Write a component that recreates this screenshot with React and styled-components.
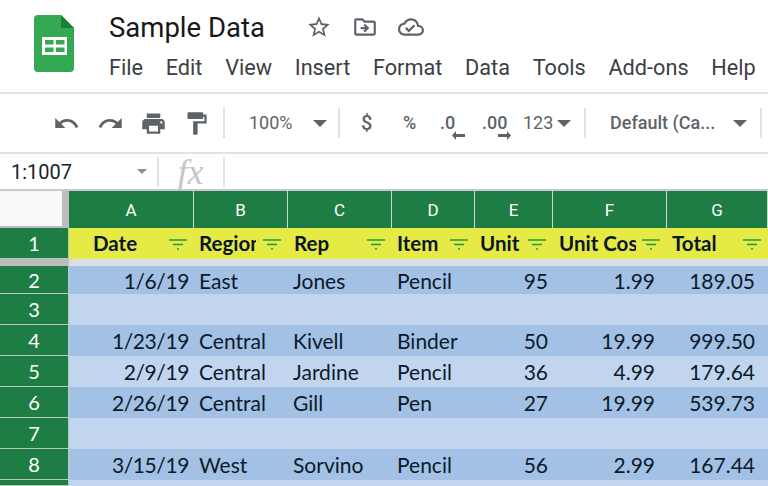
import React from 'react';
import styled, { createGlobalStyle } from 'styled-components';

const GlobalStyle = createGlobalStyle`
  html, body {
    margin: 0;
    padding: 0;
    background: #fff;
    overflow: hidden;
  }
`;

const Page = styled.div`
  width: 768px;
  height: 486px;
  overflow: hidden;
  font-family: Roboto, "Liberation Sans", sans-serif;
  color: #202124;
`;

const Header = styled.header`
  height: 94px;
  display: flex;
  padding-left: 34px;
  box-sizing: border-box;
  border-bottom: 2px solid #e2e3e5;
`;

const Logo = styled.svg`
  width: 40px;
  height: 57px;
  margin-top: 15px;
  flex: none;
`;

const TitleBlock = styled.div`
  margin-left: 35px;
  display: flex;
  flex-direction: column;
`;

const TitleRow = styled.div`
  display: flex;
  align-items: center;
  height: 36px;
  margin-top: 9px;
`;

const Title = styled.div`
  font-size: 27.5px;
  width: 197px;
  color: #17181a;
`;

const TitleIcon = styled.svg`
  width: ${p => p.$w || 26}px;
  height: 26px;
  margin-right: ${p => p.$gap || 0}px;
  fill: #5f6368;
`;

const Menu = styled.nav`
  display: flex;
  gap: 22.7px;
  margin-top: 10px;
  font-size: 21.7px;
  line-height: 26px;
  color: #3c4043;
`;

const Toolbar = styled.div`
  height: 60px;
  box-sizing: border-box;
  border-bottom: 2px solid #e2e3e5;
  display: flex;
  align-items: center;
  padding-left: 53px;
  color: #5f6368;
`;

const ToolIcon = styled.svg`
  width: 27px;
  height: 27px;
  fill: #5f6368;
  margin-right: ${p => p.$gap || 0}px;
  flex: none;
`;

const Sep = styled.div`
  width: 2px;
  height: 30px;
  background: #dfe3e8;
  margin: 0 ${p => p.$right || 0}px 0 ${p => p.$left || 0}px;
  flex: none;
`;

const ToolText = styled.div`
  font-size: ${p => p.$size || 18}px;
  font-weight: ${p => p.$bold ? 500 : 400};
  width: ${p => p.$w}px;
  flex: none;
  white-space: nowrap;
  line-height: 24px;
  position: relative;
`;

const Caret = styled.span`
  width: 0;
  height: 0;
  border-left: ${p => p.$size || 7}px solid transparent;
  border-right: ${p => p.$size || 7}px solid transparent;
  border-top: ${p => p.$size || 7}px solid ${p => p.$color || '#5f6368'};
  flex: none;
`;

const DecimalArrow = styled.svg`
  position: absolute;
  top: 20px;
  left: ${p => p.$left}px;
  width: 13px;
  height: 9px;
  fill: #5f6368;
`;

const FormulaBar = styled.div`
  height: 37px;
  box-sizing: border-box;
  border-bottom: 2px solid #c9cacc;
  display: flex;
  align-items: center;
  padding-left: 11px;
`;

const NameBox = styled.div`
  width: 126px;
  font-size: 20px;
  color: #202124;
  flex: none;
`;

const Fx = styled.div`
  font-family: "Liberation Serif", serif;
  font-style: italic;
  font-size: 36px;
  color: #c4c6c9;
  width: 27px;
  margin: 0 19px 0 18px;
  text-align: center;
  line-height: 30px;
  flex: none;
  white-space: nowrap;
`;

const Grid = styled.div`
  display: grid;
  grid-template-columns: 69px 125px 94px 104px 83px 78px 114px 101px;
  grid-auto-rows: min-content;
`;

const Corner = styled.div`
  height: 37px;
  box-sizing: border-box;
  background: #f8f9fa;
  border-right: 7px solid #bdbdbd;
  border-bottom: 2px solid #bdbdbd;
`;

const ColHead = styled.div`
  height: 37px;
  box-sizing: border-box;
  background: #1e7d43;
  border-right: 1px solid #c6d6cc;
  color: #fff;
  font-size: 17px;
  display: flex;
  align-items: center;
  justify-content: center;
`;

const RowHead = styled.div`
  height: ${p => p.$h}px;
  box-sizing: border-box;
  background: #1e7d43;
  border-bottom: 1px solid #b9c9bf;
  border-right: 1px solid #b9c9bf;
  color: #fff;
  font-family: Lato, sans-serif;
  font-size: 20px;
  display: flex;
  align-items: center;
  justify-content: center;
`;

const Cell = styled.div`
  height: ${p => p.$h}px;
  box-sizing: border-box;
  background: ${p => p.$bg};
  font-family: Lato, "Open Sans", sans-serif;
  font-size: 21px;
  letter-spacing: ${p => p.$tight ? '-0.4px' : '0'};
  color: #0c1a2b;
  padding: 0 ${p => p.$padRight}px 0 5px;
  display: flex;
  align-items: center;
  justify-content: ${p => p.$right ? 'flex-end' : 'flex-start'};
  white-space: nowrap;
  overflow: hidden;
`;

const HeadCell = styled.div`
  height: 31px;
  box-sizing: border-box;
  background: #e6ea44;
  font-family: Lato, "Open Sans", sans-serif;
  font-weight: 700;
  font-size: 20.5px;
  color: #0a1526;
  display: flex;
  align-items: center;
  padding: 0 0 2px ${p => p.$pad}px;
  position: relative;
  white-space: nowrap;
  overflow: hidden;
`;

const HeadLabel = styled.span`
  display: block;
  overflow: hidden;
  width: ${p => p.$w}px;
  flex: none;
`;

const FilterIcon = styled.svg`
  position: absolute;
  right: 6px;
  top: 10px;
  width: 20px;
  height: 13px;
  stroke: #1e9a4a;
  stroke-width: 1.5;
  fill: none;
`;

const FreezeHead = styled.div`
  height: 7px;
  background: #bdbdbd;
`;

const FreezeCell = styled.div`
  height: 7px;
  grid-column: span 7;
  background: #d8dde6;
`;

const icons = {
  undo: 'M12.5 8c-2.65 0-5.05.99-6.9 2.6L2 7v9h9l-3.62-3.62c1.39-1.16 3.16-1.88 5.12-1.88 3.54 0 6.55 2.31 7.6 5.5l2.37-.78C21.08 11.03 17.15 8 12.5 8z',
  redo: 'M18.4 10.6C16.55 8.99 14.15 8 11.5 8c-4.65 0-8.58 3.03-9.96 7.22L3.9 16c1.05-3.19 4.05-5.5 7.6-5.5 1.95 0 3.73.72 5.12 1.88L13 16h9V7l-3.6 3.6z',
  print: 'M19 8H5c-1.66 0-3 1.34-3 3v6h4v4h12v-4h4v-6c0-1.66-1.34-3-3-3zm-3 11H8v-5h8v5zm3-7c-.55 0-1-.45-1-1s.45-1 1-1 1 .45 1 1-.45 1-1 1zm-1-9H6v4h12V3z',
  paint: 'M18 4V3c0-.55-.45-1-1-1H5c-.55 0-1 .45-1 1v4c0 .55.45 1 1 1h12c.55 0 1-.45 1-1V6h1v4H9v11c0 .55.45 1 1 1h2c.55 0 1-.45 1-1v-9h8V4h-3z',
  star: 'M22 9.24l-7.19-.62L12 2 9.19 8.63 2 9.24l5.46 4.73L5.82 21 12 17.27 18.18 21l-1.63-7.03L22 9.24zM12 15.4l-3.76 2.27 1-4.28-3.32-2.88 4.38-.38L12 6.1l1.71 4.04 4.38.38-3.32 2.88 1 4.28L12 15.4z',
  move: 'M20 6h-8l-2-2H4c-1.1 0-1.99.9-1.99 2L2 18c0 1.1.9 2 2 2h16c1.1 0 2-.9 2-2V8c0-1.1-.9-2-2-2zm0 12H4V6h5.17l2 2H20v10zm-8.01-9l-1.41 1.41L12.16 12H8v2h4.16l-1.59 1.59L11.99 17 16 13.01 11.99 9z',
  cloud: 'M19.35 10.04C18.67 6.59 15.64 4 12 4 9.11 4 6.6 5.64 5.35 8.04 2.34 8.36 0 10.91 0 14c0 3.31 2.69 6 6 6h13c2.76 0 5-2.24 5-5 0-2.64-2.05-4.78-4.65-4.96zM19 18H6c-2.21 0-4-1.79-4-4 0-2.05 1.53-3.76 3.56-3.97l1.07-.11.5-.95C8.08 7.14 9.94 6 12 6c2.62 0 4.88 1.86 5.39 4.43l.3 1.5 1.53.11c1.56.1 2.78 1.41 2.78 2.96 0 1.65-1.35 3-3 3zm-9-3.82l-2.09-2.09L6.5 13.5 10 17l6.01-6.01-1.41-1.41z',
};

const menuItems = ['File', 'Edit', 'View', 'Insert', 'Format', 'Data', 'Tools', 'Add-ons', 'Help'];
const columns = ['A', 'B', 'C', 'D', 'E', 'F', 'G'];
const headers = [
  { label: 'Date', pad: 24 },
  { label: 'Region', pad: 5, clip: 57 },
  { label: 'Rep', pad: 6 },
  { label: 'Item', pad: 5 },
  { label: 'Unit', pad: 5 },
  { label: 'Unit Cost', pad: 6, clip: 77 },
  { label: 'Total', pad: 5 },
];

const DARK = '#a2c1e4';
const LIGHT = '#c1d6ee';

const rows = [
  { n: 2, h: 28, bg: DARK, cells: ['1/6/19', 'East', 'Jones', 'Pencil', '95', '1.99', '189.05'] },
  { n: 3, h: 31, bg: LIGHT, cells: [] },
  { n: 4, h: 31, bg: DARK, cells: ['1/23/19', 'Central', 'Kivell', 'Binder', '50', '19.99', '999.50'] },
  { n: 5, h: 31, bg: LIGHT, cells: ['2/9/19', 'Central', 'Jardine', 'Pencil', '36', '4.99', '179.64'] },
  { n: 6, h: 31, bg: DARK, cells: ['2/26/19', 'Central', 'Gill', 'Pen', '27', '19.99', '539.73'] },
  { n: 7, h: 31, bg: LIGHT, cells: [] },
  { n: 8, h: 31, bg: DARK, cells: ['3/15/19', 'West', 'Sorvino', 'Pencil', '56', '2.99', '167.44'] },
  { n: '', h: 6, bg: LIGHT, cells: [] },
];

const isRight = i => i === 0 || i >= 4;
const rightPad = [5, 5, 5, 5, 5, 12, 13];

const Icon = ({ name, gap }) => (
  <ToolIcon viewBox="0 0 24 24" $gap={gap}><path d={icons[name]} /></ToolIcon>
);

export default function App() {
  return (
    <Page>
      <GlobalStyle />
      <Header>
        <Logo viewBox="0 0 40 57">
          <path d="M4 0h23l13 13v40a4 4 0 0 1-4 4H4a4 4 0 0 1-4-4V4a4 4 0 0 1 4-4z" fill="#34a853" />
          <path d="M27 0l13 13H27z" fill="#188038" />
          <path d="M8 22h25v18H8z" fill="#fff" />
          <path d="M11 25h8.5v4.5H11zM22 25h8.5v4.5H22zM11 32.5h8.5V37H11zM22 32.5h8.5V37H22z" fill="#34a853" />
        </Logo>
        <TitleBlock>
          <TitleRow>
            <Title>Sample Data</Title>
            <TitleIcon viewBox="0 0 24 24" $gap={20}><path d={icons.star} /></TitleIcon>
            <TitleIcon viewBox="0 0 24 24" $gap={20}><path d={icons.move} /></TitleIcon>
            <TitleIcon viewBox="0 0 24 24" $w={26}><path d={icons.cloud} /></TitleIcon>
          </TitleRow>
          <Menu>
            {menuItems.map(item => <span key={item}>{item}</span>)}
          </Menu>
        </TitleBlock>
      </Header>

      <Toolbar>
        <Icon name="undo" gap={17} />
        <Icon name="redo" gap={16} />
        <Icon name="print" gap={16} />
        <Icon name="paint" />
        <Sep $left={13} $right={24} />
        <ToolText $w={64}>100%</ToolText>
        <Caret />
        <Sep $left={11} $right={21} />
        <ToolText $w={42} $size={20} $bold>$</ToolText>
        <ToolText $w={37} $bold>%</ToolText>
        <ToolText $w={42} $bold>
          .0
          <DecimalArrow viewBox="0 0 13 9" $left={12}><path d="M4 0v3h9v3H4v3L0 4.5z" /></DecimalArrow>
        </ToolText>
        <ToolText $w={41} $bold>
          .00
          <DecimalArrow viewBox="0 0 13 9" $left={16}><path d="M9 0v3H0v3h9v3l4-4.5z" /></DecimalArrow>
        </ToolText>
        <ToolText $w={34}>123</ToolText>
        <Caret />
        <Sep $left={13} $right={24} />
        <ToolText $w={123} $bold>Default (Ca...</ToolText>
        <Caret />
        <Sep $left={13} />
      </Toolbar>

      <FormulaBar>
        <NameBox>1:1007</NameBox>
        <Caret $size={5} $color="#8a8d91" />
        <Sep $left={10} />
        <Fx>fx</Fx>
        <Sep />
      </FormulaBar>

      <Grid>
        <Corner />
        {columns.map(c => <ColHead key={c}>{c}</ColHead>)}

        <RowHead $h={31}>1</RowHead>
        {headers.map(h => (
          <HeadCell key={h.label} $pad={h.pad}>
            {h.clip ? <HeadLabel $w={h.clip}>{h.label}</HeadLabel> : h.label}
            <FilterIcon viewBox="0 0 20 13">
              <path d="M1 2h18M5 6.5h10M9 11h2" />
            </FilterIcon>
          </HeadCell>
        ))}

        <FreezeHead />
        <FreezeCell />

        {rows.map(r => (
          <React.Fragment key={r.n || 'last'}>
            <RowHead $h={r.h}>{r.n}</RowHead>
            {columns.map((c, i) => (
              <Cell key={c} $h={r.h} $bg={r.bg} $right={isRight(i)} $tight={i === 0} $padRight={rightPad[i]}>{r.cells[i]}</Cell>
            ))}
          </React.Fragment>
        ))}
      </Grid>
    </Page>
  );
}
